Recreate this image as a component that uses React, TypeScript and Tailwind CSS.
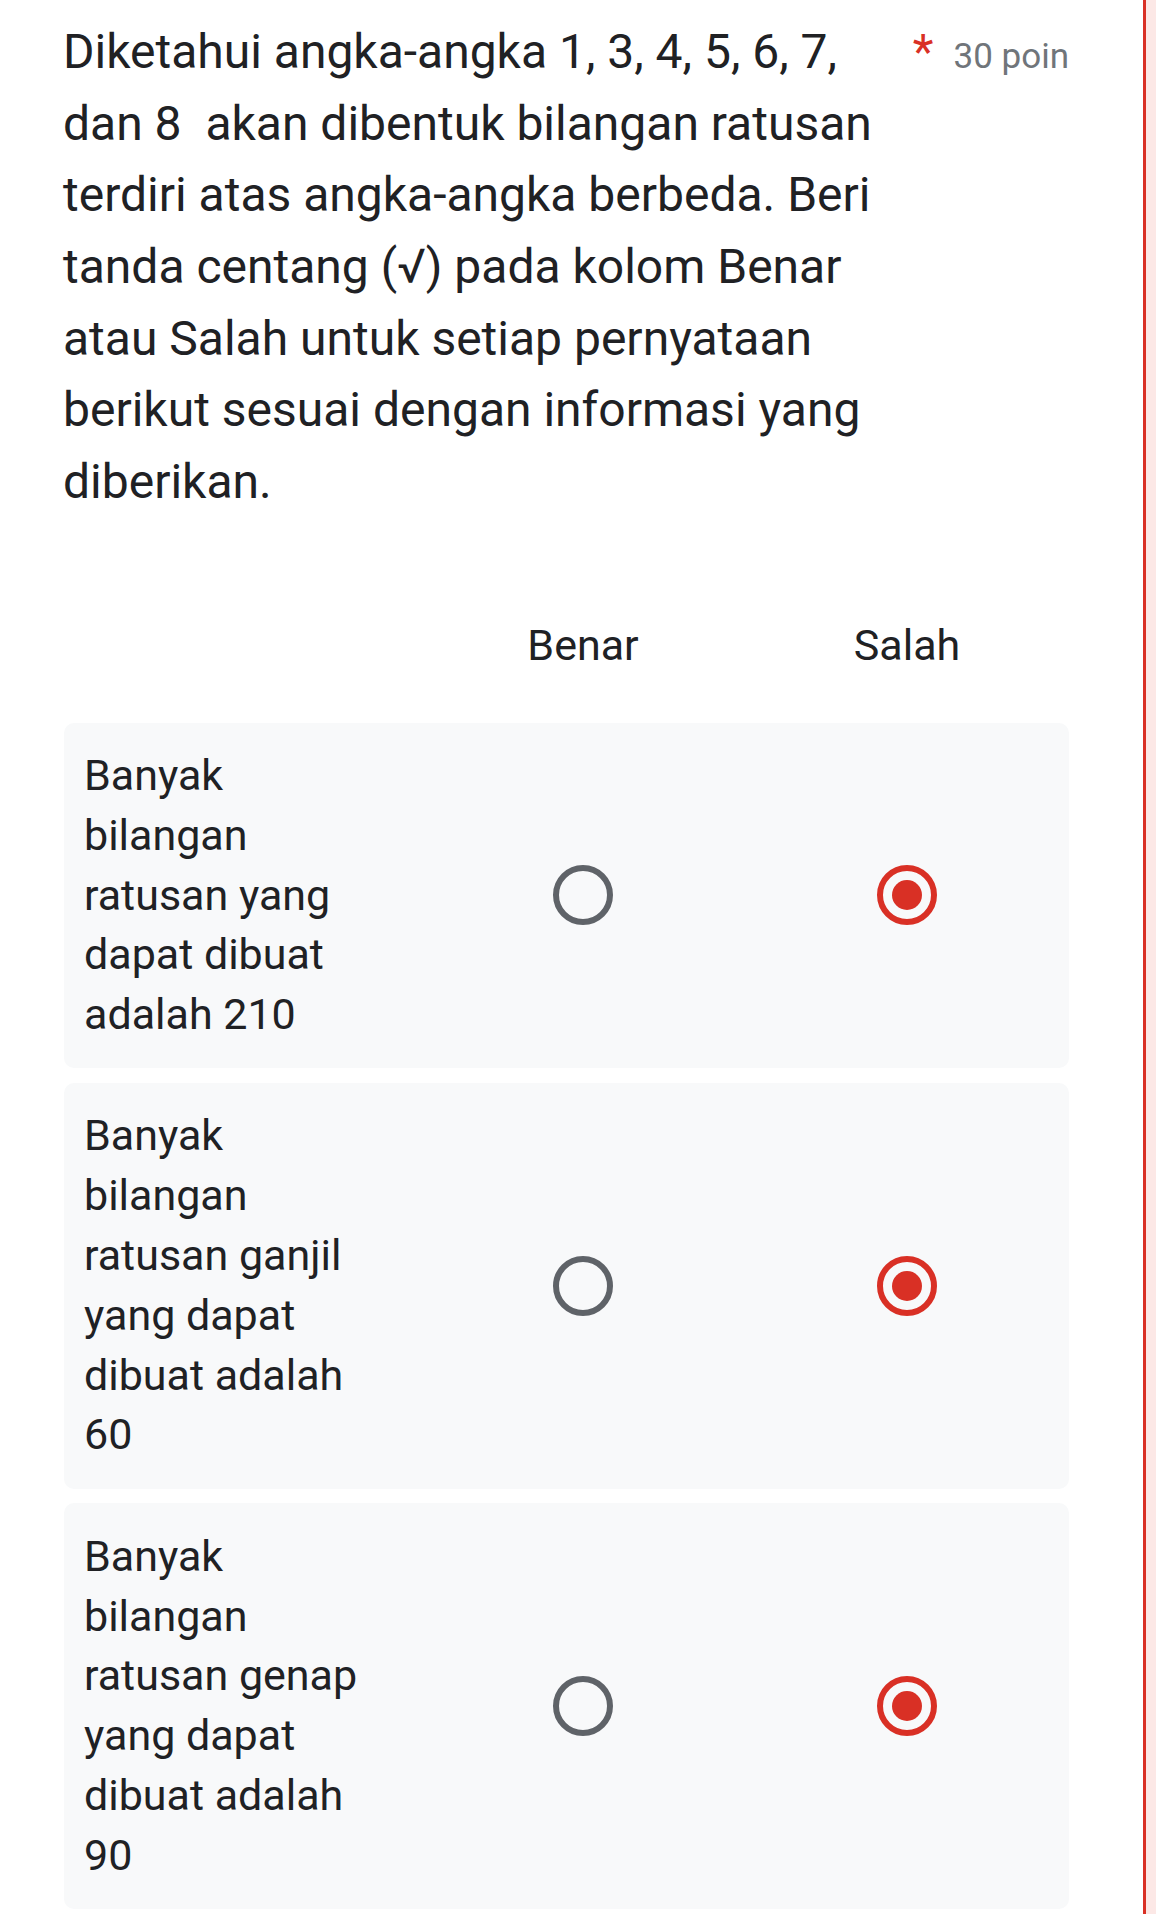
import React from "react";

const rows = [
  "Banyak bilangan ratusan yang dapat dibuat adalah 210",
  "Banyak bilangan ratusan ganjil yang dapat dibuat adalah 60",
  "Banyak bilangan ratusan genap yang dapat dibuat adalah 90",
];

function Radio({ checked }: { checked: boolean }) {
  if (checked) {
    return (
      <div className="w-[60px] h-[60px] rounded-full border-[6px] border-[#d93025] flex items-center justify-center">
        <div className="w-[30px] h-[30px] rounded-full bg-[#d93025]" />
      </div>
    );
  }
  return <div className="w-[60px] h-[60px] rounded-full border-[6px] border-[#5f6368]" />;
}

export default function App() {
  return (
    <div
      className="w-[1156px] h-[1914px] flex bg-white text-[#202124] overflow-hidden"
      style={{ fontFamily: "Roboto, 'Noto Sans', Arial, sans-serif" }}
    >
      <div className="flex-1 pl-[64px] pr-[74px] pt-[16px]">
        <div className="flex items-baseline">
          <p className="w-[838px] shrink-0 -ml-[1px] text-[48px] leading-[71.67px]">
            Diketahui angka-angka 1, 3, 4, 5, 6, 7, dan 8&nbsp; akan dibentuk bilangan ratusan terdiri atas angka-angka berbeda. Beri tanda centang (√) pada kolom Benar atau Salah untuk setiap pernyataan berikut sesuai dengan informasi yang diberikan.
          </p>
          <div className="ml-auto flex items-baseline">
            <span className="text-[48px] leading-[71.67px] text-[#d93025]">*</span>
            <span className="ml-[20px] text-[35px] text-[#70757a]">30 poin</span>
          </div>
        </div>

        <div className="grid grid-cols-[357px_324px_324px] mt-[98px] mb-[47px] text-[43px] leading-[59.8px]">
          <div />
          <div className="text-center">Benar</div>
          <div className="text-center">Salah</div>
        </div>

        <div className="flex flex-col gap-[14.5px]">
          {rows.map((r, i) => (
            <div
              key={i}
              className="grid grid-cols-[357px_324px_324px] items-center bg-[#f8f9fa] rounded-[10px] py-[23.5px]"
            >
              <div className="pl-[20px] pr-[42px] text-[43px] leading-[59.8px]">{r}</div>
              <div className="flex justify-center">
                <Radio checked={false} />
              </div>
              <div className="flex justify-center">
                <Radio checked={true} />
              </div>
            </div>
          ))}
        </div>
      </div>
      <div className="w-[3px] bg-[#d93025]" />
      <div className="w-[11px] bg-[#fce8e6]" />
    </div>
  );
}
